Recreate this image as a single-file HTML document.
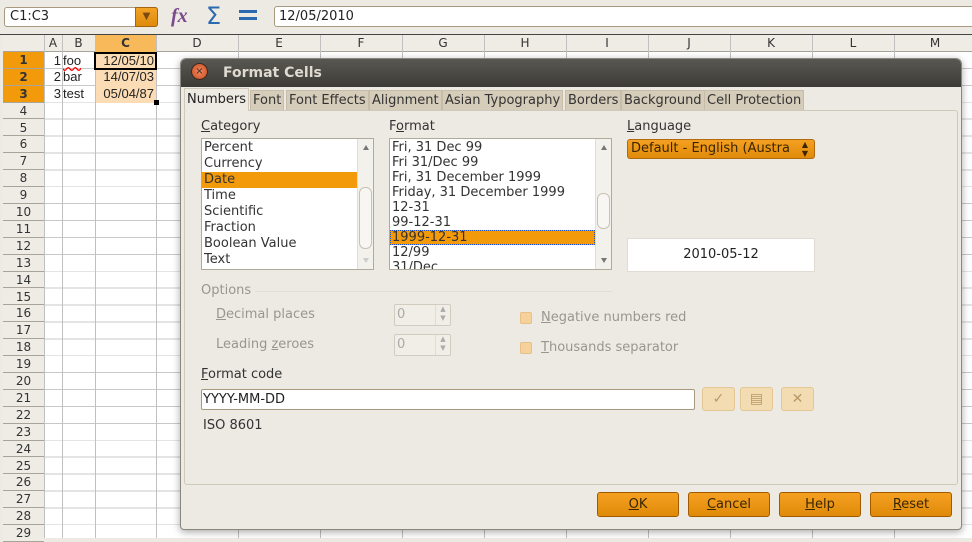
<!DOCTYPE html>
<html><head><meta charset="utf-8"><style>
*{box-sizing:border-box;margin:0;padding:0}
body{width:972px;height:538px;overflow:hidden;background:#edeae4;font-family:"DejaVu Sans","Liberation Sans",sans-serif;font-size:13px;color:#222;position:relative}
.a{position:absolute}
.grid{left:44px;top:52px;width:928px;height:486px;background:#fff;
background-image:repeating-linear-gradient(to bottom,transparent 0,transparent 16px,#c8c8c8 16px,#c8c8c8 16.9px);}
.vl{position:absolute;top:35px;width:1px;height:503px;background:#c0c0c0}
.ch{position:absolute;top:35px;height:17px;text-align:center;font-size:12px;line-height:17px;color:#333}
.rh{position:absolute;left:3px;width:41px;height:16.9px;text-align:center;font-size:12px;line-height:17px;border-bottom:1px solid #a8a49a;color:#333;background:#efece6}
.cell{position:absolute;font-family:"Liberation Sans",sans-serif;font-size:13px;line-height:16px}
.tab{position:absolute;top:90px;height:20px;background:#d5ccba;border:1px solid #c6bca8;border-bottom:none;font-size:13px;line-height:19px;padding:0 2px;color:#333}
.lbl{position:absolute;font-size:13px;color:#333}
.list{position:absolute;background:#fff;border:1px solid #b0aa9c;overflow:hidden}
.list div{height:16px;line-height:16px;padding-left:2px;font-size:13px;color:#333}
.list.f div{height:15px;line-height:15px}
.sel{background:#f39a0b}
.sb{position:absolute;right:0;top:0;width:16px;height:100%!important;background:#f3f1ec;border-left:1px solid #ddd;padding:0!important}
.up{position:absolute;left:5px;top:6px;width:0;height:0!important;border-left:3px solid transparent;border-right:3px solid transparent;border-bottom:5px solid #777;padding:0!important}
.dn{position:absolute;left:5px;bottom:6px;width:0;height:0!important;border-left:3px solid transparent;border-right:3px solid transparent;border-top:5px solid #777;padding:0!important}
.btn{position:absolute;top:492px;width:82px;height:25px;border:1px solid #a05a00;border-radius:3px;background:linear-gradient(#f5a020,#e08a0a);text-align:center;line-height:24px;font-size:13px;color:#3a2500}
.dis{color:#9a968c}
.cb{position:absolute;width:12px;height:12px;border-radius:2px;background:#f6d29a;border:1px solid #e6c088}
.spin{position:absolute;width:57px;height:22px;border:1px solid #d2ccc0;border-radius:2px;background:#f1eee8;color:#aaa;font-size:13px;line-height:20px;padding-left:2px}
.ib{position:absolute;top:387px;width:33px;height:24px;border:1px solid #e3c896;border-radius:3px;background:#f4dcb2;color:#b89868;text-align:center;line-height:22px;font-size:14px}
</style></head><body>
<div class="a" style="left:4px;top:7px;width:154px;height:20px;background:#fff;border:1px solid #a89a80;border-radius:3px;font-size:13px;line-height:18px;padding-left:5px">C1:C3</div>
<div class="a" style="left:135px;top:7px;width:23px;height:20px;background:linear-gradient(#f3a326,#de8a0c);border:1px solid #a66310;border-radius:0 3px 3px 0;color:#7a4a10;font-size:10px;text-align:center;line-height:18px">▼</div>
<div class="a" style="left:171px;top:5px;font-family:'Liberation Serif',serif;font-style:italic;font-weight:bold;font-size:20px;color:#7a4a8c">fx</div>
<div class="a" style="left:206px;top:2px;font-size:24px;color:#2a6ab0">Σ</div>
<div class="a" style="left:239px;top:10px;width:18px;height:3px;background:#2a6ab0"></div>
<div class="a" style="left:239px;top:17px;width:18px;height:3px;background:#2a6ab0"></div>
<div class="a" style="left:274px;top:6px;width:700px;height:21px;background:#fff;border:1px solid #a89a80;border-radius:3px;font-size:13px;line-height:19px;padding-left:4px">12/05/2010</div>
<div class="a" style="left:0;top:34px;width:972px;height:1px;background:#444"></div>
<div class="a" style="left:3px;top:35px;width:969px;height:17px;background:#efece6;border-bottom:1px solid #a8a49a"></div>
<div class="a grid"></div>
<div class="a" style="left:95px;top:35px;width:61px;height:17px;background:#f7b95a"></div>
<div class="a" style="left:95px;top:52px;width:61px;height:51px;background:#fbdcb4"></div>
<div class="a" style="left:3px;top:52px;width:41px;height:51px;background:#f39a0b"></div>
<div class="vl" style="left:44px"></div><div class="vl" style="left:62px"></div><div class="vl" style="left:95px"></div><div class="vl" style="left:156px"></div><div class="vl" style="left:238px"></div><div class="vl" style="left:320px"></div><div class="vl" style="left:402px"></div><div class="vl" style="left:484px"></div><div class="vl" style="left:566px"></div><div class="vl" style="left:648px"></div><div class="vl" style="left:730px"></div><div class="vl" style="left:812px"></div><div class="vl" style="left:894px"></div>
<div class="ch" style="left:44px;width:18px">A</div><div class="ch" style="left:62px;width:33px">B</div><div class="ch" style="left:95px;width:61px;font-weight:bold">C</div><div class="ch" style="left:156px;width:82px">D</div><div class="ch" style="left:238px;width:82px">E</div><div class="ch" style="left:320px;width:82px">F</div><div class="ch" style="left:402px;width:82px">G</div><div class="ch" style="left:484px;width:82px">H</div><div class="ch" style="left:566px;width:82px">I</div><div class="ch" style="left:648px;width:82px">J</div><div class="ch" style="left:730px;width:82px">K</div><div class="ch" style="left:812px;width:82px">L</div><div class="ch" style="left:894px;width:82px">M</div>
<div class="rh" style="top:51.9px;background:#f39a0b;font-weight:bold">1</div>
<div class="rh" style="top:68.8px;background:#f39a0b;font-weight:bold">2</div>
<div class="rh" style="top:85.7px;background:#f39a0b;font-weight:bold">3</div>
<div class="rh" style="top:102.6px">4</div><div class="rh" style="top:119.5px">5</div><div class="rh" style="top:136.4px">6</div><div class="rh" style="top:153.3px">7</div><div class="rh" style="top:170.2px">8</div><div class="rh" style="top:187.1px">9</div><div class="rh" style="top:204px">10</div><div class="rh" style="top:220.9px">11</div><div class="rh" style="top:237.8px">12</div><div class="rh" style="top:254.7px">13</div><div class="rh" style="top:271.6px">14</div><div class="rh" style="top:288.5px">15</div><div class="rh" style="top:305.4px">16</div><div class="rh" style="top:322.3px">17</div><div class="rh" style="top:339.2px">18</div><div class="rh" style="top:356.1px">19</div><div class="rh" style="top:373px">20</div><div class="rh" style="top:389.9px">21</div><div class="rh" style="top:406.8px">22</div><div class="rh" style="top:423.7px">23</div><div class="rh" style="top:440.6px">24</div><div class="rh" style="top:457.5px">25</div><div class="rh" style="top:474.4px">26</div><div class="rh" style="top:491.3px">27</div><div class="rh" style="top:508.2px">28</div><div class="rh" style="top:525.1px">29</div>
<div class="cell" style="left:44px;top:53px;width:17px;text-align:right">1</div>
<div class="cell" style="left:44px;top:69px;width:17px;text-align:right">2</div>
<div class="cell" style="left:44px;top:86px;width:17px;text-align:right">3</div>
<div class="cell" style="left:63px;top:53px;text-decoration:underline wavy red">foo</div>
<div class="cell" style="left:63px;top:69px">bar</div>
<div class="cell" style="left:63px;top:86px">test</div>
<div class="cell" style="left:95px;top:53px;width:59px;text-align:right">12/05/10</div>
<div class="cell" style="left:95px;top:69px;width:59px;text-align:right">14/07/03</div>
<div class="cell" style="left:95px;top:86px;width:59px;text-align:right">05/04/87</div>
<div class="a" style="left:94px;top:52px;width:63px;height:18px;border:2px solid #000"></div>
<div class="a" style="left:154px;top:100px;width:5px;height:5px;background:#000"></div>
<div class="a" style="left:180px;top:58px;width:782px;height:472px;background:#edeae4;border:1px solid #8a877e;border-radius:6px 6px 4px 4px;box-shadow:0 2px 8px rgba(0,0,0,.35);overflow:hidden">
<div style="height:28px;background:linear-gradient(#5a5852,#3c3b37);color:#dfdbd2;font-weight:bold;font-size:14px;line-height:28px;padding-left:42px">Format Cells</div>
</div>
<div class="a" style="left:191px;top:63px;width:17px;height:17px;border-radius:50%;background:radial-gradient(#f08a60,#c84a20);border:1px solid #3a2a20;color:#3a2a20;font-size:10px;text-align:center;line-height:15px">×</div>
<div class="a" style="left:184px;top:110px;width:774px;height:375px;border:1px solid #cfc9bc;border-radius:3px;background:#edeae4"></div>
<div class="tab" style="left:184px;top:88px;height:23px;background:#edeae4;border-color:#cfc9bc;color:#222;line-height:21px">Numbers</div>
<div class="tab" style="left:250px">Font</div>
<div class="tab" style="left:286px">Font Effects</div>
<div class="tab" style="left:369px">Alignment</div>
<div class="tab" style="left:442px">Asian Typography</div>
<div class="tab" style="left:565px">Borders</div>
<div class="tab" style="left:621px">Background</div>
<div class="tab" style="left:704px">Cell Protection</div>

<div class="lbl" style="left:201px;top:119px"><u>C</u>ategory</div>
<div class="lbl" style="left:389px;top:119px">F<u>o</u>rmat</div>
<div class="lbl" style="left:627px;top:119px"><u>L</u>anguage</div>
<div class="list" style="left:201px;top:138px;width:173px;height:132px">
<div style="margin-top:1px">Percent</div><div>Currency</div><div class="sel" style="margin-right:16px">Date</div><div>Time</div><div>Scientific</div><div>Fraction</div><div>Boolean Value</div><div>Text</div>
<div class="sb"><div style="position:absolute;left:1px;top:48px;width:13px;height:62px;border:1px solid #c8c2b4;border-radius:6px;background:#f8f6f2"></div><div class="up"></div><div class="dn" style="border-top-color:#ccc"></div></div>
</div>
<div class="list f" style="left:389px;top:138px;width:223px;height:132px">
<div style="margin-top:1px">Fri, 31 Dec 99</div><div>Fri 31/Dec 99</div><div>Fri, 31 December 1999</div><div>Friday, 31 December 1999</div><div>12-31</div><div>99-12-31</div><div class="sel" style="margin-right:16px;outline:1px dotted #2050c0;outline-offset:-1px">1999-12-31</div><div>12/99</div><div>31/Dec</div>
<div class="sb"><div style="position:absolute;left:1px;top:54px;width:13px;height:36px;border:1px solid #c8c2b4;border-radius:6px;background:#f8f6f2"></div><div class="up"></div><div class="dn"></div></div>
</div>
<div class="a" style="left:627px;top:139px;width:188px;height:20px;border:1px solid #b06a10;border-radius:3px;background:linear-gradient(#f5a020,#e08a0a);font-size:13px;line-height:18px;padding-left:3px;color:#3a2500">Default - English (Austra<span style="position:absolute;right:6px;top:0;font-size:8px;line-height:9px">▲<br>▼</span></div>
<div class="a" style="left:627px;top:238px;width:188px;height:34px;background:#fff;border:1px solid #e0dcd4;text-align:center;line-height:32px;font-size:13px">2010-05-12</div>

<div class="lbl dis" style="left:201px;top:283px">Options</div>
<div class="a" style="left:255px;top:291px;width:357px;height:1px;background:#e2ded4"></div>
<div class="lbl dis" style="left:216px;top:307px"><u>D</u>ecimal places</div>
<div class="lbl dis" style="left:216px;top:337px">Leading <u>z</u>eroes</div>
<div class="spin" style="left:394px;top:304px">0<span style="position:absolute;right:0;top:0;width:15px;height:20px;border-left:1px solid #ddd;font-size:7px;line-height:9px;text-align:center">▲<br>▼</span></div>
<div class="spin" style="left:394px;top:334px">0<span style="position:absolute;right:0;top:0;width:15px;height:20px;border-left:1px solid #ddd;font-size:7px;line-height:9px;text-align:center">▲<br>▼</span></div>
<div class="cb" style="left:520px;top:312px"></div>
<div class="cb" style="left:520px;top:342px"></div>
<div class="lbl dis" style="left:541px;top:310px"><u>N</u>egative numbers red</div>
<div class="lbl dis" style="left:541px;top:340px"><u>T</u>housands separator</div>
<div class="lbl" style="left:201px;top:367px"><u>F</u>ormat code</div>
<div class="a" style="left:201px;top:389px;width:494px;height:21px;background:#fff;border:1px solid #a89a80;border-radius:2px;font-size:13px;line-height:19px;padding-left:1px">YYYY-MM-DD</div>
<div class="ib" style="left:702px">✓</div>
<div class="ib" style="left:740px">▤</div>
<div class="ib" style="left:781px">✕</div>
<div class="lbl" style="left:203px;top:418px">ISO 8601</div>

<div class="btn" style="left:597px"><u>O</u>K</div>
<div class="btn" style="left:688px"><u>C</u>ancel</div>
<div class="btn" style="left:779px"><u>H</u>elp</div>
<div class="btn" style="left:870px"><u>R</u>eset</div>
</body></html>
